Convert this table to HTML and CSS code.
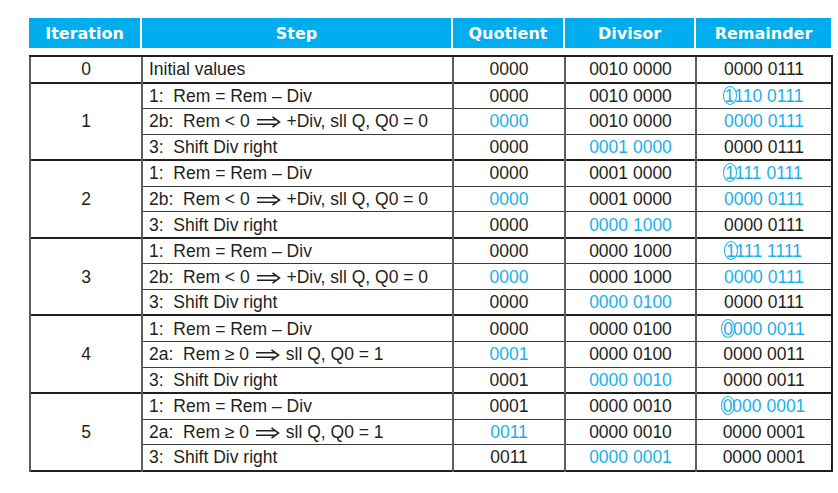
FILE: index.html
```html
<!DOCTYPE html>
<html>
<head>
<meta charset="utf-8">
<link rel="stylesheet" href="styles.css">
</head>
<body>
<div class="wrap">
  <div class="head">
    <div class="hcell">Iteration</div>
    <div class="hcell">Step</div>
    <div class="hcell">Quotient</div>
    <div class="hcell">Divisor</div>
    <div class="hcell">Remainder</div>
  </div>
  <table class="tbl">
    <colgroup>
      <col class="c-it"><col class="c-step"><col class="c-q"><col class="c-d"><col class="c-r">
    </colgroup>
    <tbody>
      <tr class="grp"><td class="it">0</td><td class="step">Initial values</td><td>0000</td><td>0010 0000</td><td>0000 0111</td></tr>

      <tr class="grp"><td class="it" rowspan="3">1</td><td class="step">1:&nbsp; Rem = Rem – Div</td><td>0000</td><td>0010 0000</td><td class="hl"><span class="circ">1</span>110 0111</td></tr>
      <tr><td class="step">2b:&nbsp; Rem &lt; 0 <svg class="arr" viewBox="0 0 24 12" width="24" height="12"><path d="M0 3.7H19M0 8.3H19M15.5 0.8L22.5 6L15.5 11.2"/></svg> +Div, sll Q, Q0 = 0</td><td class="hl">0000</td><td>0010 0000</td><td class="hl">0000 0111</td></tr>
      <tr><td class="step">3:&nbsp; Shift Div right</td><td>0000</td><td class="hl">0001 0000</td><td>0000 0111</td></tr>

      <tr class="grp"><td class="it" rowspan="3">2</td><td class="step">1:&nbsp; Rem = Rem – Div</td><td>0000</td><td>0001 0000</td><td class="hl"><span class="circ">1</span>111 0111</td></tr>
      <tr><td class="step">2b:&nbsp; Rem &lt; 0 <svg class="arr" viewBox="0 0 24 12" width="24" height="12"><path d="M0 3.7H19M0 8.3H19M15.5 0.8L22.5 6L15.5 11.2"/></svg> +Div, sll Q, Q0 = 0</td><td class="hl">0000</td><td>0001 0000</td><td class="hl">0000 0111</td></tr>
      <tr><td class="step">3:&nbsp; Shift Div right</td><td>0000</td><td class="hl">0000 1000</td><td>0000 0111</td></tr>

      <tr class="grp"><td class="it" rowspan="3">3</td><td class="step">1:&nbsp; Rem = Rem – Div</td><td>0000</td><td>0000 1000</td><td class="hl"><span class="circ">1</span>111 1111</td></tr>
      <tr><td class="step">2b:&nbsp; Rem &lt; 0 <svg class="arr" viewBox="0 0 24 12" width="24" height="12"><path d="M0 3.7H19M0 8.3H19M15.5 0.8L22.5 6L15.5 11.2"/></svg> +Div, sll Q, Q0 = 0</td><td class="hl">0000</td><td>0000 1000</td><td class="hl">0000 0111</td></tr>
      <tr><td class="step">3:&nbsp; Shift Div right</td><td>0000</td><td class="hl">0000 0100</td><td>0000 0111</td></tr>

      <tr class="grp"><td class="it" rowspan="3">4</td><td class="step">1:&nbsp; Rem = Rem – Div</td><td>0000</td><td>0000 0100</td><td class="hl"><span class="circ">0</span>000 0011</td></tr>
      <tr><td class="step">2a:&nbsp; Rem ≥ 0 <svg class="arr" viewBox="0 0 24 12" width="24" height="12"><path d="M0 3.7H19M0 8.3H19M15.5 0.8L22.5 6L15.5 11.2"/></svg> sll Q, Q0 = 1</td><td class="hl">0001</td><td>0000 0100</td><td>0000 0011</td></tr>
      <tr><td class="step">3:&nbsp; Shift Div right</td><td>0001</td><td class="hl">0000 0010</td><td>0000 0011</td></tr>

      <tr class="grp"><td class="it" rowspan="3">5</td><td class="step">1:&nbsp; Rem = Rem – Div</td><td>0001</td><td>0000 0010</td><td class="hl"><span class="circ">0</span>000 0001</td></tr>
      <tr><td class="step">2a:&nbsp; Rem ≥ 0 <svg class="arr" viewBox="0 0 24 12" width="24" height="12"><path d="M0 3.7H19M0 8.3H19M15.5 0.8L22.5 6L15.5 11.2"/></svg> sll Q, Q0 = 1</td><td class="hl">0011</td><td>0000 0010</td><td>0000 0001</td></tr>
      <tr><td class="step">3:&nbsp; Shift Div right</td><td>0011</td><td class="hl">0000 0001</td><td>0000 0001</td></tr>
    </tbody>
  </table>
</div>
</body>
</html>
```

FILE: styles.css
```css
html, body {
  margin: 0;
  padding: 0;
  background: #ffffff;
}

.wrap {
  padding: 18px 0 0 29px;
  width: 802px;
  font-family: "Liberation Sans", Arial, sans-serif;
  color: #231f20;
}

.head {
  display: grid;
  grid-template-columns: 111px 309px 110px 129px 135px;
  column-gap: 2px;
  height: 30px;
}

.hcell {
  background: #00aeef;
  color: #ffffff;
  font-family: "DejaVu Sans", "Liberation Sans", sans-serif;
  font-weight: bold;
  font-size: 16px;
  display: flex;
  align-items: center;
  justify-content: center;
}

.tbl {
  margin-top: 7px;
  width: 802px;
  table-layout: fixed;
  border-collapse: collapse;
  border: 2px solid #231f20;
  font-size: 17.5px;
}

.c-it { width: 112px; }
.c-step { width: 311px; }
.c-q { width: 112px; }
.c-d { width: 131px; }
.c-r { width: 136px; }

.tbl td {
  height: 24.55px;
  padding: 0;
  text-align: center;
  vertical-align: middle;
  border-top: 1px solid #3a3a3a;
  border-left: 2px solid #5e5e5e;
  line-height: 18px;
  white-space: nowrap;
}

.tbl tr.grp td {
  border-top: 2px solid #231f20;
}

.tbl td.step {
  text-align: left;
  padding-left: 6px;
}

.tbl td.hl {
  color: #1ab0ec;
}

.arr {
  display: inline-block;
  vertical-align: -1px;
  margin: 0 1px 0 2px;
  fill: none;
  stroke: #231f20;
  stroke-width: 1.6;
  stroke-linejoin: miter;
}

.circ {
  position: relative;
  display: inline-block;
}

.circ::after {
  content: "";
  position: absolute;
  left: -2px;
  top: -1px;
  width: 12px;
  height: 17px;
  border: 1.5px solid #1ab0ec;
  border-radius: 50%;
}
```
